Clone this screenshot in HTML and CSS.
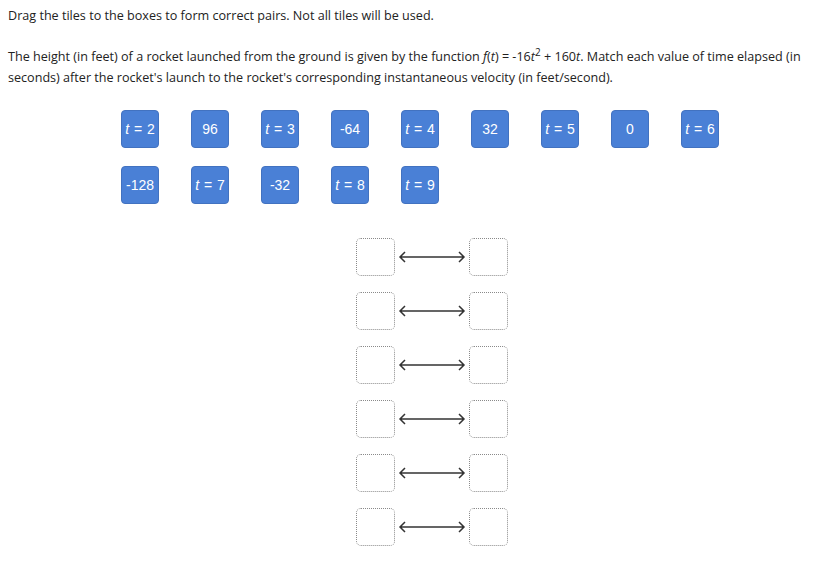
FILE: index.html
```html
<!DOCTYPE html>
<html>

<head>
    <meta charset="utf-8" />
    <title>Matching pairs</title>
    <link rel="stylesheet" href="styles.css">
</head>

<body>
    <p class="prompt">Drag the tiles to the boxes to form correct pairs. Not all tiles will be used.</p>
    <p class="prompt">The height (in feet) of a rocket launched from the ground is given by the function <i>f</i>(<i>t</i>) = -16<i>t</i><sup>2</sup> + 160<i>t</i>. Match each value of time elapsed (in seconds) after the rocket's launch to the rocket's corresponding instantaneous velocity (in feet/second).</p>

    <div class="tiles">
        <div class="tile"><i>t</i>&nbsp;= 2</div>
        <div class="tile">96</div>
        <div class="tile"><i>t</i>&nbsp;= 3</div>
        <div class="tile">-64</div>
        <div class="tile"><i>t</i>&nbsp;= 4</div>
        <div class="tile">32</div>
        <div class="tile"><i>t</i>&nbsp;= 5</div>
        <div class="tile">0</div>
        <div class="tile"><i>t</i>&nbsp;= 6</div>
        <div class="tile">-128</div>
        <div class="tile"><i>t</i>&nbsp;= 7</div>
        <div class="tile">-32</div>
        <div class="tile"><i>t</i>&nbsp;= 8</div>
        <div class="tile"><i>t</i>&nbsp;= 9</div>
    </div>

    <div class="pairs">
        <div class="pair">
            <div class="drop"></div>
            <svg class="arrow" width="70" height="14" viewBox="0 0 70 14"><path d="M8 2 L3 7 L8 12 M3 7 H67 M62 2 L67 7 L62 12" /></svg>
            <div class="drop"></div>
        </div>
        <div class="pair">
            <div class="drop"></div>
            <svg class="arrow" width="70" height="14" viewBox="0 0 70 14"><path d="M8 2 L3 7 L8 12 M3 7 H67 M62 2 L67 7 L62 12" /></svg>
            <div class="drop"></div>
        </div>
        <div class="pair">
            <div class="drop"></div>
            <svg class="arrow" width="70" height="14" viewBox="0 0 70 14"><path d="M8 2 L3 7 L8 12 M3 7 H67 M62 2 L67 7 L62 12" /></svg>
            <div class="drop"></div>
        </div>
        <div class="pair">
            <div class="drop"></div>
            <svg class="arrow" width="70" height="14" viewBox="0 0 70 14"><path d="M8 2 L3 7 L8 12 M3 7 H67 M62 2 L67 7 L62 12" /></svg>
            <div class="drop"></div>
        </div>
        <div class="pair">
            <div class="drop"></div>
            <svg class="arrow" width="70" height="14" viewBox="0 0 70 14"><path d="M8 2 L3 7 L8 12 M3 7 H67 M62 2 L67 7 L62 12" /></svg>
            <div class="drop"></div>
        </div>
        <div class="pair">
            <div class="drop"></div>
            <svg class="arrow" width="70" height="14" viewBox="0 0 70 14"><path d="M8 2 L3 7 L8 12 M3 7 H67 M62 2 L67 7 L62 12" /></svg>
            <div class="drop"></div>
        </div>
    </div>
</body>

</html>
```

FILE: styles.css
```css
body {
    margin: 0;
    padding: 5px 8px;
    font-family: "Open Sans", "Liberation Sans", sans-serif;
    font-size: 12.6px;
    color: #222;
}

.prompt {
    margin: 0 0 20px 0;
    line-height: 21px;
}

.prompt sup {
    font-size: 10px;
    line-height: 0;
    vertical-align: 5px;
}

.tiles {
    display: grid;
    grid-template-columns: repeat(9, 38px);
    gap: 18px 32px;
    margin: 22px 0 0 113px;
}

.tile {
    width: 38px;
    height: 38px;
    box-sizing: border-box;
    border: 1px solid #4272c0;
    border-radius: 4px;
    background-color: #4a80d6;
    color: white;
    font-family: "Liberation Sans", Arial, sans-serif;
    font-size: 14px;
    word-spacing: 1px;
    display: flex;
    align-items: center;
    justify-content: center;
    white-space: nowrap;
}

.pairs {
    display: flex;
    flex-direction: column;
    gap: 16px;
    margin: 34px 0 0 348px;
}

.pair {
    display: flex;
    align-items: center;
}

.drop {
    width: 39px;
    height: 38px;
    box-sizing: border-box;
    border: 1px dotted #8a8a8a;
    border-radius: 5px;
}

.arrow {
    margin: 0 2px 0 2px;
}

.arrow path {
    fill: none;
    stroke: #333;
    stroke-width: 1.5;
}
```
